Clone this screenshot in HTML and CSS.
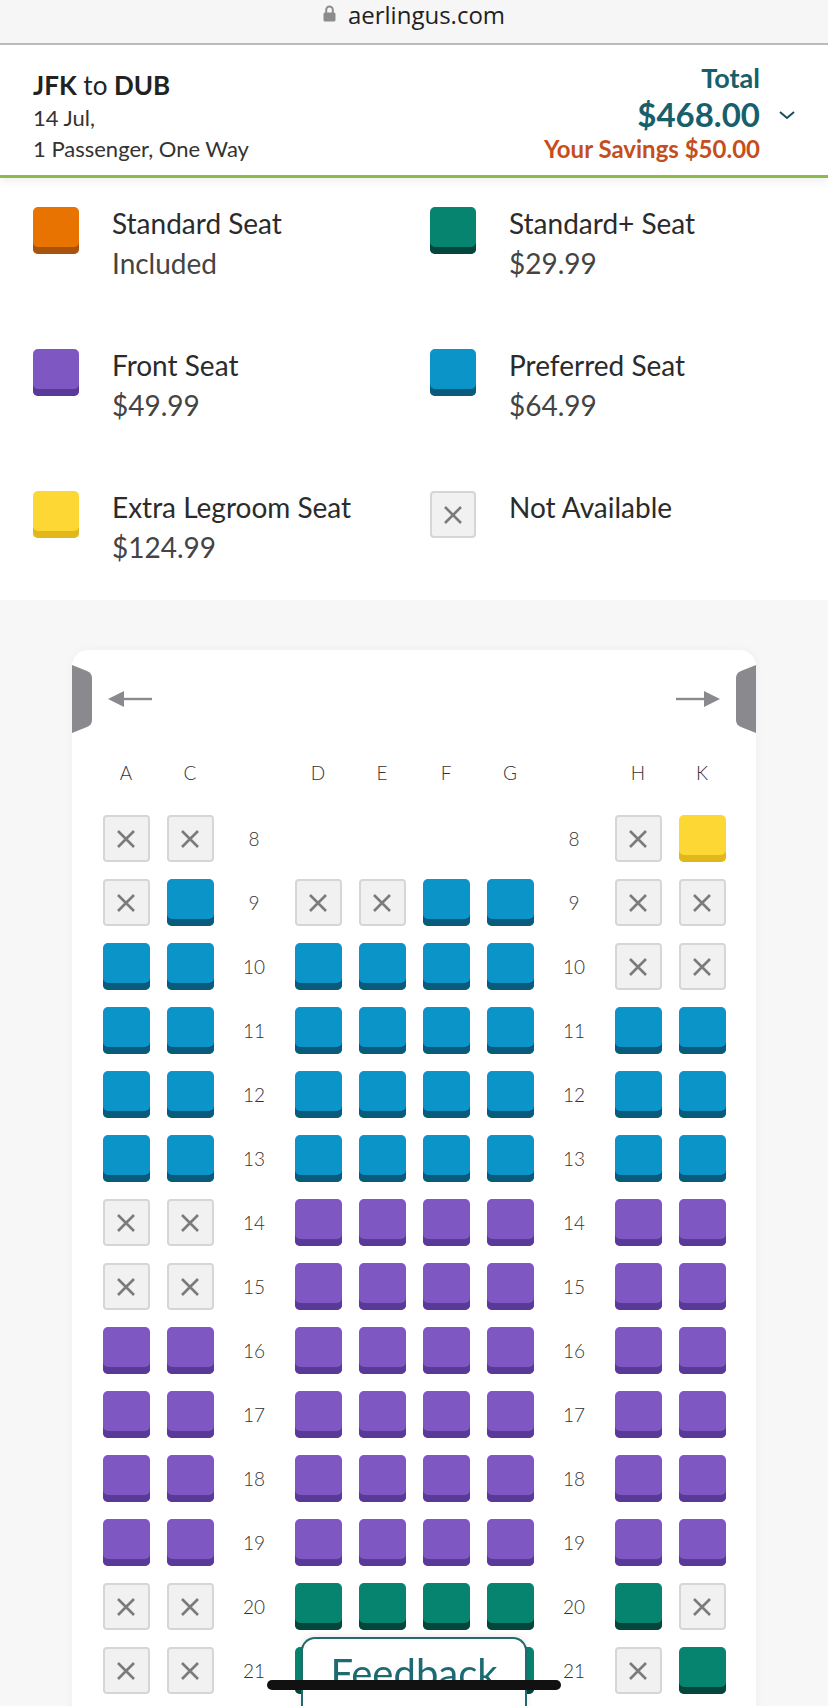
FILE: index.html
```html
<!DOCTYPE html>
<html lang="en">
<head>
  <meta charset="UTF-8">
  <meta name="viewport" content="width=device-width, initial-scale=1.0">
  <title>Seat Selection</title>
  <link rel="stylesheet" href="styles.css">
</head>
<body>

<div class="urlbar">
  <svg class="lock" width="13" height="18" viewBox="0 0 13 18">
    <path d="M3.2 9V5.8a3.3 3.3 0 0 1 6.6 0V9" fill="none" stroke="#8c8c8c" stroke-width="2"/>
    <rect x="0.5" y="8.5" width="12" height="9" rx="1.5" fill="#8c8c8c"/>
  </svg>
  <span>aerlingus.com</span>
</div>

<div class="summary">
  <div class="trip">
    <div class="route"><b>JFK</b> to <b>DUB</b></div>
    <div class="date">14 Jul,</div>
    <div class="date">1 Passenger, One Way</div>
  </div>
  <div class="totals">
    <div class="amounts">
      <div class="total-label">Total</div>
      <div class="price">$468.00</div>
      <div class="savings">Your Savings $50.00</div>
    </div>
    <svg class="chevron" width="20" height="12" viewBox="0 0 20 12">
      <path d="M3 3l7 6 7-6" fill="none" stroke="#1c4c5c" stroke-width="2"/>
    </svg>
  </div>
</div>

<div class="legend">
  <div class="legend-item">
    <div class="seat orange"></div>
    <div><div class="legend-name">Standard Seat</div><div class="legend-price">Included</div></div>
  </div>
  <div class="legend-item">
    <div class="seat teal"></div>
    <div><div class="legend-name">Standard+ Seat</div><div class="legend-price">$29.99</div></div>
  </div>
  <div class="legend-item">
    <div class="seat purple"></div>
    <div><div class="legend-name">Front Seat</div><div class="legend-price">$49.99</div></div>
  </div>
  <div class="legend-item">
    <div class="seat blue"></div>
    <div><div class="legend-name">Preferred Seat</div><div class="legend-price">$64.99</div></div>
  </div>
  <div class="legend-item">
    <div class="seat yellow"></div>
    <div><div class="legend-name">Extra Legroom Seat</div><div class="legend-price">$124.99</div></div>
  </div>
  <div class="legend-item">
    <div class="seat taken">
      <svg width="20" height="20" viewBox="0 0 20 20"><path d="M2 2L18 18M18 2L2 18" stroke="#7b7b7b" stroke-width="2.6"/></svg>
    </div>
    <div><div class="legend-name">Not Available</div></div>
  </div>
</div>

<div class="seatmap">
  <svg class="tab tab-left" width="20" height="68" viewBox="0 0 20 68">
    <path d="M0 0L15 6Q20 8 20 13V55Q20 60 15 62L0 68Z" fill="#8a8a8e"/>
  </svg>
  <svg class="tab tab-right" width="20" height="68" viewBox="0 0 20 68">
    <path d="M20 0L5 6Q0 8 0 13V55Q0 60 5 62L20 68Z" fill="#8a8a8e"/>
  </svg>

  <div class="nav">
    <svg width="44" height="18" viewBox="0 0 44 18">
      <path d="M0 9L16 1V17Z" fill="#8a8a8e"/>
      <path d="M14 9H44" stroke="#8a8a8e" stroke-width="2.4"/>
    </svg>
    <svg width="44" height="18" viewBox="0 0 44 18">
      <path d="M44 9L28 1V17Z" fill="#8a8a8e"/>
      <path d="M0 9H30" stroke="#8a8a8e" stroke-width="2.4"/>
    </svg>
  </div>

  <div class="cols">
    <span>A</span><span>C</span><span></span>
    <span>D</span><span>E</span><span>F</span><span>G</span><span></span>
    <span>H</span><span>K</span>
  </div>

  <div class="rows" id="rows"></div>
</div>

<div class="feedback">Feedback</div>
<div class="homebar"></div>

<script>
// x = not available, . = no seat, b/p/t/y = seat colours
const layout = {
  8: "xx....xy",
  9: "xbxxbbxx",
  10: "bbbbbbxx",
  11: "bbbbbbbb",
  12: "bbbbbbbb",
  13: "bbbbbbbb",
  14: "xxpppppp",
  15: "xxpppppp",
  16: "pppppppp",
  17: "pppppppp",
  18: "pppppppp",
  19: "pppppppp",
  20: "xxtttttx",
  21: "xxttttxt"
};
const names = { b: "blue", p: "purple", t: "teal", y: "yellow" };
const cross = '<svg width="20" height="20" viewBox="0 0 20 20"><path d="M2 2L18 18M18 2L2 18" stroke="#7b7b7b" stroke-width="2.6"/></svg>';

function seatCell(code) {
  if (code === ".") return '<span></span>';
  if (code === "x") return '<div class="seat taken">' + cross + '</div>';
  return '<div class="seat ' + names[code] + '"></div>';
}

const rowsEl = document.getElementById("rows");
Object.keys(layout).forEach(function (num) {
  const s = layout[num];
  let html = seatCell(s[0]) + seatCell(s[1]);
  html += '<span class="num">' + num + '</span>';
  for (let i = 2; i < 6; i++) html += seatCell(s[i]);
  html += '<span class="num">' + num + '</span>';
  html += seatCell(s[6]) + seatCell(s[7]);
  const row = document.createElement("div");
  row.className = "row";
  row.innerHTML = html;
  rowsEl.appendChild(row);
});
</script>

</body>
</html>
```

FILE: styles.css
```css
body {
  margin: 0;
  height: 1706px;
  overflow: hidden;
  font-family: Lato, "Open Sans", sans-serif;
  background-color: #f7f7f7;
  color: #2b2b2b;
}

.urlbar {
  height: 45px;
  box-sizing: border-box;
  padding-top: 0;
  display: flex;
  justify-content: center;
  align-items: flex-start;
  gap: 12px;
  background: #f6f6f6;
  border-bottom: 2px solid #bcbcbc;
  font-family: "Open Sans", sans-serif;
  font-size: 24px;
  line-height: 30px;
  color: #1f1f1f;
}
.lock {
  margin-top: 4px;
}

.summary {
  position: relative;
  z-index: 1;
  display: flex;
  justify-content: space-between;
  padding: 20px 31px 11px 33px;
  background: white;
  border-bottom: 3px solid #8cbb4a;
  box-shadow: 0 4px 8px rgba(0,0,0,0.06);
}
.route {
  margin-top: 3px;
  font-size: 26px;
  line-height: 34px;
  color: #222;
}
.route b {
  font-weight: 700;
}
.date {
  font-size: 22px;
  line-height: 31px;
  color: #333;
}
.totals {
  display: flex;
  align-items: center;
  gap: 17px;
}
.amounts {
  margin-top: -3px;
  text-align: right;
  font-weight: 700;
}
.total-label {
  font-size: 27px;
  line-height: 32px;
  color: #17606b;
}
.price {
  font-size: 33px;
  line-height: 40px;
  color: #17606b;
}
.savings {
  font-size: 24px;
  line-height: 30px;
  color: #c54f1c;
}

.legend {
  display: grid;
  grid-template-columns: 397px 1fr;
  row-gap: 62px;
  padding: 25px 0 33px 33px;
  background: white;
}
.legend-item {
  display: flex;
  gap: 33px;
}
.legend-item .seat {
  width: 46px;
  margin-top: 4px;
  flex-shrink: 0;
}
.legend-name, .legend-price {
  font-size: 28px;
  line-height: 40px;
}
.legend-price {
  color: #444;
}

.seat {
  width: 47px;
  height: 47px;
  box-sizing: border-box;
  border-radius: 5px;
  justify-self: center;
}
.seat.orange {
  background: #e97300;
  box-shadow: inset 0 -7px 0 #a9540e;
}
.seat.teal {
  background: #07846f;
  box-shadow: inset 0 -7px 0 #05463c;
}
.seat.purple {
  background: #7e57c2;
  box-shadow: inset 0 -7px 0 #5a3a98;
}
.seat.blue {
  background: #0a94c8;
  box-shadow: inset 0 -7px 0 #0a5a7b;
}
.seat.yellow {
  background: #fdd835;
  box-shadow: inset 0 -7px 0 #e1b71a;
}
.seat.taken {
  display: flex;
  align-items: center;
  justify-content: center;
  background: #f1f1f1;
  border: 2px solid #d6d6d6;
  border-radius: 4px;
}

.seatmap {
  position: relative;
  width: 684px;
  margin: 50px 0 0 72px;
  padding: 0 22px 40px;
  box-sizing: border-box;
  background: white;
  border-radius: 16px 16px 0 0;
  box-shadow: 0 0 10px rgba(0,0,0,0.04);
}
.tab {
  position: absolute;
  top: 15px;
}
.tab-left {
  left: 0;
}
.tab-right {
  right: 0;
}
.nav {
  height: 98px;
  display: flex;
  justify-content: space-between;
  align-items: center;
  padding: 0 14px;
}
.cols, .row {
  display: grid;
  grid-template-columns: repeat(10, 64px);
  align-items: center;
  text-align: center;
}
.cols {
  height: 48px;
  font-size: 19px;
  font-weight: 300;
  color: #333;
}
.rows {
  display: flex;
  flex-direction: column;
  gap: 17px;
  margin-top: 19px;
}
.num {
  font-size: 19px;
  font-weight: 300;
  color: #333;
}

.feedback {
  position: fixed;
  left: 301px;
  top: 1637px;
  width: 226px;
  height: 80px;
  box-sizing: border-box;
  padding-top: 10px;
  background: white;
  border: 2px solid #1f6b6e;
  border-bottom: none;
  border-radius: 14px 14px 0 0;
  box-shadow: 0 -2px 6px rgba(0,0,0,0.08);
  text-align: center;
  font-size: 40px;
  line-height: 48px;
  color: #1e6a72;
}
.homebar {
  position: fixed;
  left: 267px;
  top: 1680px;
  width: 294px;
  height: 10px;
  border-radius: 5px;
  background: #111;
}
```
